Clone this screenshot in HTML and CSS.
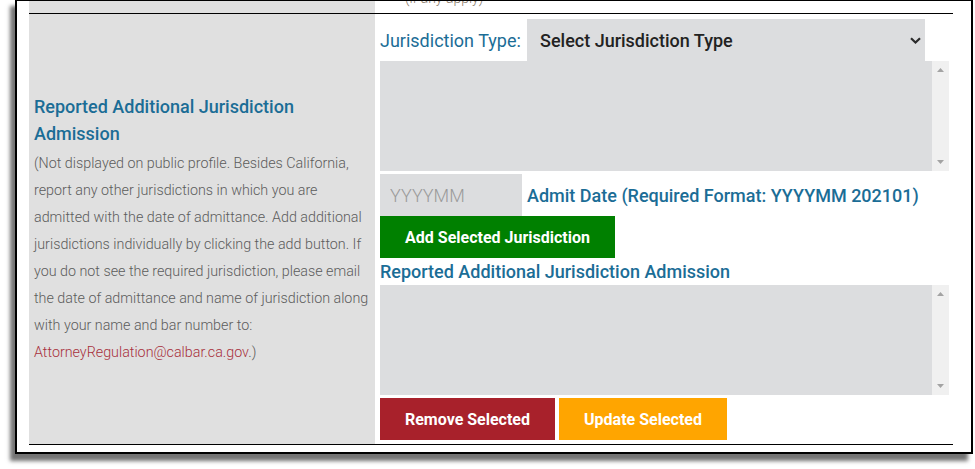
FILE: index.html
```html
<!DOCTYPE html>
<html lang="en">
<head>
<meta charset="utf-8">
<title>Reported Additional Jurisdiction Admission</title>
<link rel="stylesheet" href="styles.css">
</head>
<body>
<div class="window">
  <div class="form-table">
    <div class="row prev-row">
      <div class="cell-label"></div>
      <div class="cell-field"><span class="prev-text">(if any apply)</span></div>
    </div>
    <div class="row main-row">
      <div class="cell-label">
        <h2 class="field-title">Reported Additional Jurisdiction<br>Admission</h2>
        <p class="field-note">(Not displayed on public profile. Besides California,<br>report any other jurisdictions in which you are<br>admitted with the date of admittance. Add additional<br>jurisdictions individually by clicking the add button. If<br>you do not see the required jurisdiction, please email<br>the date of admittance and name of jurisdiction along<br>with your name and bar number to:<br><a class="email" href="mailto:AttorneyRegulation@calbar.ca.gov">AttorneyRegulation@calbar.ca.gov</a>.)</p>
      </div>
      <div class="cell-field">
        <div class="type-row">
          <label class="lbl" for="jtype">Jurisdiction Type:</label>
          <span class="select-wrap">
            <select id="jtype" class="type-select">
              <option>Select Jurisdiction Type</option>
            </select>
            <svg class="chev" width="11" height="7" viewBox="0 0 11 7"><path d="M1 1.2 L5.5 5.5 L10 1.2" fill="none" stroke="#2b2b2b" stroke-width="2.2"/></svg>
          </span>
        </div>
        <div class="listbox">
          <div class="list-area"></div>
          <div class="scrollbar">
            <svg width="17" height="12" viewBox="0 0 17 12"><path d="M5 8 L8.5 4 L12 8 Z" fill="#a3a3a3"/></svg>
            <svg width="17" height="12" viewBox="0 0 17 12"><path d="M5 4 L8.5 8 L12 4 Z" fill="#a3a3a3"/></svg>
          </div>
        </div>
        <div class="date-row">
          <input class="date-input" type="text" placeholder="YYYYMM">
          <span class="lbl strong">Admit Date (Required Format: YYYYMM 202101)</span>
        </div>
        <div class="btn-row">
          <button class="btn btn-green" type="button">Add Selected Jurisdiction</button>
        </div>
        <div class="lbl strong list-title">Reported Additional Jurisdiction Admission</div>
        <div class="listbox">
          <div class="list-area"></div>
          <div class="scrollbar">
            <svg width="17" height="12" viewBox="0 0 17 12"><path d="M5 8 L8.5 4 L12 8 Z" fill="#a3a3a3"/></svg>
            <svg width="17" height="12" viewBox="0 0 17 12"><path d="M5 4 L8.5 8 L12 4 Z" fill="#a3a3a3"/></svg>
          </div>
        </div>
        <div class="btn-row actions">
          <button class="btn btn-red" type="button">Remove Selected</button>
          <button class="btn btn-orange" type="button">Update Selected</button>
        </div>
      </div>
    </div>
  </div>
</div>
</body>
</html>
```

FILE: styles.css
```css
* { box-sizing: border-box; }

html, body {
  margin: 0;
  padding: 0;
  background: #ffffff;
  overflow: hidden;
}

body {
  width: 975px;
  height: 469px;
  font-family: Roboto, "Liberation Sans", Arial, sans-serif;
}

.window {
  margin: -1px 0 0 15px;
  width: 958px;
  height: 455px;
  border: 2px solid #000;
  background: #fff;
  box-shadow: -5px 7px 4px rgba(0, 0, 0, 0.55);
  padding: 0 18px 0 12px;
  overflow: hidden;
}

.form-table {
  border-bottom: 1px solid #000;
}

.row {
  display: grid;
  grid-template-columns: 346px 1fr;
  column-gap: 5px;
}

.prev-row {
  height: 12px;
  overflow: hidden;
}

.prev-row .cell-label {
  background: #e0e0e0;
}

.prev-text {
  display: block;
  margin-top: -17px;
  padding-left: 25px;
  font-size: 14px;
  line-height: 18px;
  color: #8a7a6a;
  font-weight: 300;
}

.main-row {
  border-top: 1px solid #000;
  height: 431px;
}

.main-row .cell-label {
  background: #e0e0e0;
  padding-left: 5px;
  display: flex;
  flex-direction: column;
  justify-content: center;
}

.field-title {
  margin: 0;
  font-size: 18px;
  line-height: 27px;
  font-weight: 500;
  color: #1b6d96;
  white-space: nowrap;
}

.field-note {
  margin: 3px 0 0;
  font-size: 14.3px;
  line-height: 27px;
  font-weight: 300;
  color: #5c5c5c;
  white-space: nowrap;
}

.email {
  color: #a8303c;
  text-decoration: none;
}

.cell-field {
  padding: 5px 4px 0 0;
  display: flex;
  flex-direction: column;
}

.lbl {
  font-size: 18px;
  color: #1b6d96;
  font-weight: 400;
  white-space: nowrap;
}

.lbl.strong {
  font-weight: 500;
}

.type-row {
  display: flex;
  align-items: center;
  height: 42px;
}

.type-row .lbl {
  width: 147px;
}

.select-wrap {
  position: relative;
  display: block;
  width: 398px;
  height: 42px;
}

.type-select {
  appearance: none;
  -webkit-appearance: none;
  width: 100%;
  height: 42px;
  border: 0;
  border-radius: 0;
  background: #dcdddf;
  padding: 0 0 0 13px;
  font-family: Roboto, "Liberation Sans", Arial, sans-serif;
  font-size: 18px;
  font-weight: 500;
  color: #222;
  outline: none;
}

.chev {
  position: absolute;
  right: 4px;
  top: 18px;
  pointer-events: none;
}

.listbox {
  display: flex;
  height: 110px;
  width: 569px;
}

.list-area {
  flex: 1;
  background: #dcdddf;
}

.scrollbar {
  width: 17px;
  background: #f0f0f0;
  display: flex;
  flex-direction: column;
  justify-content: space-between;
  padding: 3px 0 3px;
}

.scrollbar svg {
  display: block;
}

.date-row {
  margin-top: 3px;
  display: flex;
  align-items: center;
  height: 42px;
}

.date-input {
  width: 142px;
  height: 42px;
  border: 0;
  border-radius: 0;
  background: #dcdddf;
  padding: 0 0 0 10px;
  font-family: Roboto, "Liberation Sans", Arial, sans-serif;
  font-size: 18px;
  color: #333;
  outline: none;
  margin-right: 5px;
}

.date-input::placeholder {
  color: #9a9a9a;
  font-weight: 300;
}

.btn-row {
  display: flex;
  height: 42px;
}

.btn {
  height: 42px;
  border: 0;
  border-radius: 0;
  padding: 0;
  font-family: Roboto, "Liberation Sans", Arial, sans-serif;
  font-size: 16px;
  font-weight: 700;
  color: #fff;
  cursor: pointer;
}

.btn-green {
  width: 235px;
  background: #008000;
}

.list-title {
  height: 27px;
  line-height: 27px;
}

.actions {
  margin-top: 3px;
  gap: 4px;
}

.btn-red {
  width: 175px;
  background: #a8212b;
}

.btn-orange {
  width: 168px;
  background: #ffa500;
}
```
